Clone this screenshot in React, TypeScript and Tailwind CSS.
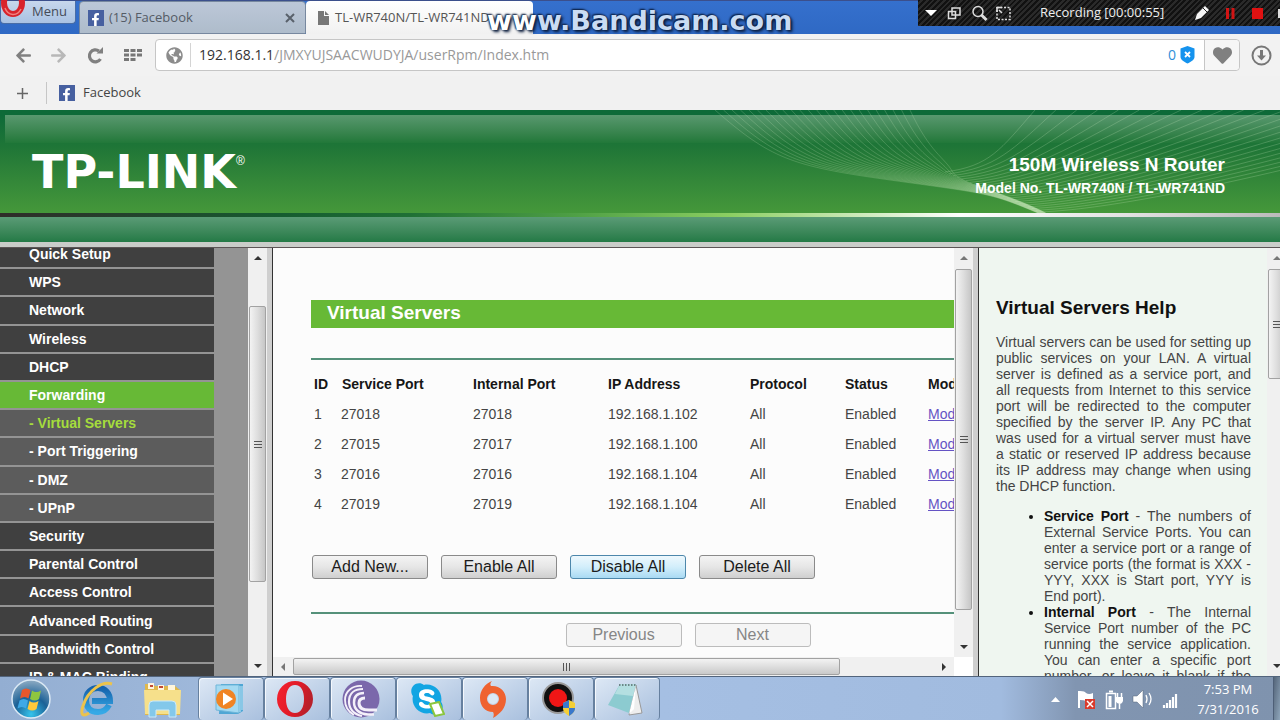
import type { ReactNode } from "react";
import { FaFacebookF, FaSkype, FaHeart, FaArrowLeft, FaArrowRight, FaGlobeAmericas } from "react-icons/fa";

const tone = {
  thumb: "border border-[#a2a2a2] rounded-[2px]",
};

function Arrow({ dir, dark }: { dir: "up" | "down" | "left" | "right"; dark?: boolean }) {
  const d = {
    up: "M0 5 4 1 8 5Z",
    down: "M0 1 4 5 8 1Z",
    left: "M6 -1 2 3 6 7Z",
    right: "M2 -1 6 3 2 7Z",
  }[dir];
  return (
    <svg width="8" height="6" viewBox="0 0 8 6" className="overflow-visible">
      <path d={d} fill={dark ? "#333" : "#777"} />
    </svg>
  );
}

function VScroll({ before, thumb, dark }: { before: string; thumb: string; dark?: boolean }) {
  return (
    <div className="flex w-[19px] shrink-0 flex-col items-center bg-[#f0f0f0]">
      <div className="flex h-5 items-center"><Arrow dir="up" dark={dark} /></div>
      <div className={before} />
      <div className={`flex w-[17px] shrink-0 flex-col items-center justify-center gap-[2px] bg-linear-to-r from-[#f3f3f3] via-[#dedede] to-[#c6c6c6] ${tone.thumb} ${thumb}`}>
        <i className="h-px w-2 bg-[#555]" />
        <i className="h-px w-2 bg-[#555]" />
        <i className="h-px w-2 bg-[#555]" />
      </div>
      <div className="flex-1" />
      <div className="flex h-5 items-center"><Arrow dir="down" dark /></div>
    </div>
  );
}

const menu = [
  ["Quick Setup", "top"], ["WPS", "top"], ["Network", "top"], ["Wireless", "top"], ["DHCP", "top"],
  ["Forwarding", "open"], ["- Virtual Servers", "current"], ["- Port Triggering", "sub"], ["- DMZ", "sub"],
  ["- UPnP", "sub"], ["Security", "top"], ["Parental Control", "top"], ["Access Control", "top"],
  ["Advanced Routing", "top"], ["Bandwidth Control", "top"], ["IP & MAC Binding", "top"],
];

const menuStyle: Record<string, string> = {
  top: "bg-[#404040] text-white",
  open: "bg-[#67b936] text-white",
  current: "bg-[#5c5c5c] text-[#a5dc3c]",
  sub: "bg-[#5c5c5c] text-white",
};

const servers = [
  ["1", "27018", "27018", "192.168.1.102"],
  ["2", "27015", "27017", "192.168.1.100"],
  ["3", "27016", "27016", "192.168.1.104"],
  ["4", "27019", "27019", "192.168.1.104"],
];

function PushButton({ children, kind = "normal" }: { children: ReactNode; kind?: "normal" | "hot" | "off" }) {
  const look = {
    normal: "border-[#8a8a8a] bg-linear-to-b from-[#f4f4f4] via-[#e6e6e6] to-[#cfcfcf] text-[#1c1c1c]",
    hot: "border-[#4d87ab] bg-linear-to-b from-[#eef8fd] via-[#d2eefb] to-[#a9daf3] text-[#1c1c1c]",
    off: "border-[#bcbcbc] bg-[#f5f5f5] text-[#868686]",
  }[kind];
  return (
    <button type="button" disabled={kind === "off"} className={`h-6 w-[116px] rounded-[3px] border text-base leading-5 ${look}`}>
      {children}
    </button>
  );
}

function FacebookMark() {
  return (
    <span className="flex size-4 shrink-0 items-end justify-end bg-[#4760a0] pr-[2px] text-white">
      <FaFacebookF size={13} />
    </span>
  );
}

function Waves() {
  const left = Array.from({ length: 24 }, (_, i) => i / 23);
  const right = Array.from({ length: 24 }, (_, i) => i / 23);
  return (
    <svg aria-hidden="true" viewBox="0 0 580 103" className="absolute top-0 right-0 h-[103px] w-[580px]" fill="none" stroke="#d6f0c8" strokeWidth="1">
      {left.map((t) => (
        <path key={t} opacity=".2" d={`M${15 + 195 * t} 0C${70 + 160 * t} ${48 - 5 * t} ${90 + 155 * t} ${56 - 8 * t} ${190 + 62 * t} ${70 - 9 * t}S${290 + 12 * t} ${83 - 2 * t} ${338 + 8 * t} 103`} />
      ))}
      {right.map((t) => (
        <path key={t} opacity=".22" d={`M${245 + 95 * t} ${62 + 40 * t}C${290 + 125 * t} ${56 + 43 * t} ${300 + 260 * t} ${40 + 30 * t} ${335 + 480 * t} 0`} />
      ))}
    </svg>
  );
}

function TitleBar() {
  return (
    <div className="relative flex h-[34px] shrink-0 items-stretch border-t border-[#3b4f8c] bg-linear-to-b from-[#3570cd] to-[#2f69c4]">
      <button type="button" className="mb-[10px] flex w-[76px] shrink-0 items-center rounded-b border border-t-0 border-[#496da6] bg-linear-to-b from-[#c7d7ec] to-[#a9c2e3] text-[13px] text-[#444b58]">
        <svg width="25" height="18" viewBox="0 0 25 18" className="mb-[6px]">
          <ellipse cx="12" cy="3" rx="9" ry="11" fill="none" stroke="#d8232c" strokeWidth="6" />
          <path d="M4 8C7 16 16 17 20 9" fill="none" stroke="#f0817f" strokeWidth="1.500" />
        </svg>
        <span className="pl-[6px]">Menu</span>
      </button>
      <button type="button" className="ml-[3px] flex w-[227px] shrink-0 items-center rounded-t border border-[#77889f] bg-linear-to-b from-[#bcc7d8] to-[#aebccb] px-2 text-[13px] text-[#555c66]">
        <FacebookMark />
        <span className="flex-1 pl-[5px] text-left">(15) Facebook</span>
        <svg width="10" height="10" viewBox="0 0 10 10" className="mr-[2px]" stroke="#59616b" strokeWidth="2"><path d="m1 1 8 8M9 1 1 9" /></svg>
      </button>
      <button type="button" className="flex w-[227px] shrink-0 items-center overflow-hidden rounded-t bg-linear-to-b from-white to-[#f1f1f1] px-3 text-[13px] whitespace-nowrap text-[#555]">
        <svg width="11" height="14" viewBox="0 0 11 14" className="shrink-0" fill="#777"><path d="M0 0h6v5h5v9H0z" /><path d="M7 0l4 4H7z" /></svg>
        <span className="pl-[6px]">TL-WR740N/TL-WR741ND</span>
      </button>
      <div className="absolute top-[2px] left-[487px] font-['DejaVu_Sans'] text-[27px] leading-9 font-bold text-[#c9dcf3] [text-shadow:0_0_2px_#0a1c3c,2px_2px_3px_#0a1c3c,-1px_-1px_2px_#0a1c3c]">
        <span className="text-white">ww</span>w.Bandicam.com
      </div>
      <div className="absolute -top-px right-0 flex h-[26px] w-[362px] items-center bg-[#1b1b1b] bg-[repeating-linear-gradient(135deg,#111_0_2px,#2a2a2a_2px_4px)] text-[#eee]">
        <svg width="112" height="25" viewBox="0 0 112 25" fill="none" stroke="#ddd" strokeWidth="1.500">
          <path d="M7 9h12l-6 6z" fill="#fff" stroke="none" />
          <path d="M34 7h8v7h-8zM30.500 10.500h7v7h-7z" />
          <circle cx="60" cy="10.500" r="5" /><path d="m63.500 14 5 5" strokeWidth="3" />
          <path d="M79 6.500h13v12H79z" strokeDasharray="2 1.500" /><path d="M79 6v5M79 6.500h5M81 9l3 3" />
        </svg>
        <span className="ml-[10px] w-[140px] text-[13px]">Recording [00:00:55]</span>
        <svg width="100" height="25" viewBox="0 0 100 25" className="shrink-0">
          <path d="m15 19 2-6 8-8 4 4-8 8z" fill="#f5f5f5" /><path d="m23 7 4 4" stroke="#222" />
          <path d="M46 7h3v11h-3zM51.500 7h3v11h-3z" fill="#d21414" />
          <path d="M72 7h11v11H72z" fill="#e01111" />
          <path d="M98 8h2v9h-2z" fill="#ddd" />
        </svg>
      </div>
    </div>
  );
}

function AddressRow() {
  return (
    <div className="flex h-[42px] shrink-0 items-center bg-[#f2f2f2] text-[#808080]">
      <button type="button" aria-label="Back" className="ml-[15px]"><FaArrowLeft size={17} /></button>
      <button type="button" aria-label="Forward" className="ml-[18px] text-[#b8b8b8]"><FaArrowRight size={17} /></button>
      <button type="button" aria-label="Reload" className="ml-5">
        <svg width="17" height="17" viewBox="0 0 17 17" fill="none"><path d="M13.500 12A6 6 0 1 1 12 4" stroke="#808080" strokeWidth="3.200" /><path d="M9.500 6.500H16V0z" fill="#808080" /></svg>
      </button>
      <button type="button" aria-label="Speed dial" className="ml-5">
        <svg width="18" height="14" viewBox="0 0 18 14" fill="#777"><path d="M0 1h5v3H0zM6.500 1h5v3h-5zM13 1h5v3h-5zM0 5.500h5v3H0zM6.500 5.500h5v3h-5zM13 5.500h5v3h-5zM0 10h5v3H0zM6.500 10h5v3h-5z" /></svg>
      </button>
      <div className="ml-[13px] flex h-8 flex-1 items-center rounded border border-[#c6c6c6] bg-white text-sm">
        <FaGlobeAmericas size={17} className="ml-[10px] text-[#8c8c8c]" />
        <span className="ml-[7px] h-6 w-px bg-[#d4d4d4]" />
        <label htmlFor="url" className="pl-2 text-[#333]">192.168.1.1</label>
        <input id="url" defaultValue="/JMXYUJSAACWUDYJA/userRpm/Index.htm" className="min-w-0 flex-1 bg-transparent text-[#999] outline-none" />
        <span className="text-[#2f8fd8]">0</span>
        <svg width="15" height="18" viewBox="0 0 15 18" className="mr-[9px] ml-1"><path d="M7.500 0 14.500 2.500V11c0 3-4 5-7 6.500C4.500 16 .5 14 .5 11V2.500z" fill="#1593ee" /><path d="m5 6 5 5M10 6l-5 5" stroke="#fff" strokeWidth="1.800" /></svg>
        <button type="button" aria-label="Bookmark page" className="flex h-[30px] w-[35px] items-center justify-center rounded-r border-l border-[#c6c6c6] bg-[#f6f6f6]"><FaHeart size={19} /></button>
      </div>
      <button type="button" aria-label="Downloads" className="mr-[8px] ml-[11px]">
        <svg width="21" height="21" viewBox="0 0 21 21" fill="none" stroke="#777"><circle cx="10.500" cy="10.500" r="9" strokeWidth="2" /><path d="M10.500 5v7" strokeWidth="3" /><path d="M6 10.500h9l-4.500 5z" fill="#777" stroke="none" /></svg>
      </button>
    </div>
  );
}

function RouterHeader() {
  return (
    <header className="shrink-0">
      <div className="relative flex h-[103px] items-center justify-between overflow-hidden bg-linear-to-b from-[#0d6a38] from-5% via-[#1f7637] via-36% to-[#45983a] pr-[55px] pl-8 text-white">
        <div className="absolute top-[5px] right-0 left-[5px] h-[28px] bg-linear-to-b from-[#58986f] to-[#217839]" />
        <Waves />
        <div className="relative mt-5 flex items-start">
          <span className="font-['DejaVu_Sans'] text-[46px] leading-[46px] font-bold">TP-LINK</span>
          <span className="mt-1 text-xs leading-4">®</span>
        </div>
        <div className="relative mt-[28px] text-right font-bold">
          <div className="text-[19px] leading-6">150M Wireless N Router</div>
          <div className="text-sm leading-[22px]">Model No. TL-WR740N / TL-WR741ND</div>
        </div>
      </div>
      <div className="h-1 bg-[linear-gradient(90deg,#2f2c29_0%,#155c30_22%,#1f7035_32%,#4fa045_45%,#8ccf62_57%,#ffffff_75%,#e2e2e2_88%,#bababa_100%)]" />
      <div className="h-[25px] bg-linear-to-b from-[#5a9b76] to-[#237a46]" />
      <div className="h-[5px] bg-[#c9cdc9]" />
      <div className="h-px bg-[#5b5555]" />
    </header>
  );
}

function MainFrame() {
  return (
    <main className="flex min-w-0 flex-1 flex-col bg-[#fcfcfc]">
      <div className="flex min-h-0 flex-1">
        <div className="min-w-0 flex-1 overflow-hidden">
          <div className="w-[792px] pt-[52px] pl-[38px]">
            <h1 className="h-7 bg-[#67b936] pl-4 text-[19px] leading-[26px] font-bold text-white">Virtual Servers</h1>
            <hr className="mt-[30px] h-[2px] border-0 bg-[#55917a]" />
            <table className="mt-[9px] ml-[3px] w-[714px] table-fixed text-left text-sm text-[#444]">
              <thead className="text-[#161616]">
                <tr className="h-[30px]">
                  <th className="w-[27px]">ID</th>
                  <th className="w-[132px] pl-px">Service Port</th>
                  <th className="w-[135px]">Internal Port</th>
                  <th className="w-[142px]">IP Address</th>
                  <th className="w-[95px]">Protocol</th>
                  <th className="w-[83px]">Status</th>
                  <th className="w-[100px]">Modify</th>
                </tr>
              </thead>
              <tbody>
                {servers.map(([id, port, inner, ip]) => (
                  <tr key={id} className="h-[30px]">
                    <td>{id}</td>
                    <td>{port}</td>
                    <td>{inner}</td>
                    <td>{ip}</td>
                    <td>All</td>
                    <td>Enabled</td>
                    <td className="whitespace-nowrap"><a href="#modify" className="text-[#6553c4] underline">Modify</a></td>
                  </tr>
                ))}
              </tbody>
            </table>
            <div className="mt-9 ml-px flex gap-[13px]">
              <PushButton>Add New...</PushButton>
              <PushButton>Enable All</PushButton>
              <PushButton kind="hot">Disable All</PushButton>
              <PushButton>Delete All</PushButton>
            </div>
            <hr className="mt-[33px] h-[2px] border-0 bg-[#55917a]" />
            <div className="mt-[9px] flex justify-center gap-[13px]">
              <PushButton kind="off">Previous</PushButton>
              <PushButton kind="off">Next</PushButton>
            </div>
          </div>
        </div>
        <VScroll before="h-px" thumb="h-[341px]" />
      </div>
      <div className="flex h-[19px] shrink-0 items-center bg-[#f0f0f0]">
        <span className="flex w-[20px] justify-center"><Arrow dir="left" /></span>
        <span className="flex h-[17px] w-[547px] items-center justify-center gap-[2px] rounded-[2px] border border-[#a2a2a2] bg-linear-to-b from-[#f3f3f3] via-[#dedede] to-[#c9c9c9]">
          <i className="h-2 w-px bg-[#555]" />
          <i className="h-2 w-px bg-[#555]" />
          <i className="h-2 w-px bg-[#555]" />
        </span>
        <span className="flex-1" />
        <span className="flex w-[20px] justify-center"><Arrow dir="right" dark /></span>
        <span className="h-full w-[19px] bg-white" />
      </div>
    </main>
  );
}

function HelpFrame() {
  return (
    <aside className="flex w-[301px] shrink-0 bg-[#eff6f0]">
      <div className="flex-1 overflow-hidden pt-[49px] pr-4 pl-[17px] text-justify text-sm leading-4 text-[#444]">
        <h2 className="text-left text-[19px] leading-[22px] font-bold text-[#111]">Virtual Servers Help</h2>
        <p className="mt-[15px]">
          Virtual servers can be used for setting up public services on your LAN. A virtual server is defined as a
          service port, and all requests from Internet to this service port will be redirected to the computer specified
          by the server IP. Any PC that was used for a virtual server must have a static or reserved IP address because
          its IP address may change when using the DHCP function.
        </p>
        <ul className="mt-[14px] list-disc pl-12 marker:text-[#111]">
          <li>
            <b className="text-[#111]">Service Port</b> - The numbers of External Service Ports. You can enter a service
            port or a range of service ports (the format is XXX - YYY, XXX is Start port, YYY is End port).
          </li>
          <li>
            <b className="text-[#111]">Internal Port</b> - The Internal Service Port number of the PC running the
            service application. You can enter a specific port number, or leave it blank if the Internal Port is the
            same as the Service Port.
          </li>
        </ul>
      </div>
      <div className="flex w-[13px] shrink-0 overflow-hidden">
        <VScroll before="h-px" thumb="h-[110px]" />
      </div>
    </aside>
  );
}

const apps: { name: string; running: boolean; icon: ReactNode }[] = [
  {
    name: "Start", running: false, icon: (
      <svg width="40" height="40" viewBox="0 0 40 40">
        <defs><radialGradient id="orb" cx=".5" cy=".9" r=".9"><stop offset="0" stopColor="#35c4ec" /><stop offset=".5" stopColor="#1b6196" /><stop offset="1" stopColor="#8facc4" /></radialGradient></defs>
        <circle cx="20" cy="20" r="19" fill="url(#orb)" stroke="#dbe9f5" strokeWidth="1.500" />
        <path d="M11 11q4-3 8.500 0l-2 8.500q-4-3-8.500 0z" fill="#e8572c" /><path d="M21 11.500q4 3 9 0l-2 8.500q-4 3-9 0z" fill="#8fc63f" />
        <path d="M8.500 21.500q4-3 8.500 0l-2 8q-4-3-8.500 0z" fill="#3fa9e6" /><path d="M18.500 22q4 3 9 0l-2 8q-4 3-9 0z" fill="#ffc93a" />
      </svg>
    ),
  },
  {
    name: "Internet Explorer", running: false, icon: (
      <svg width="38" height="38" viewBox="0 0 38 38" fill="none">
        <defs><linearGradient id="ie" x2="0" y2="1"><stop stopColor="#1562ac" /><stop offset="1" stopColor="#35a9e6" /></linearGradient></defs>
        <path d="M31 25C28 31 24 32 20 32 12 32 8 27 8 20S13 8 20 8s12 5 12 13H14" stroke="url(#ie)" strokeWidth="6" />
        <path d="M34 4C24 1 10 10 5 26c-3 9 0 11 6 7" stroke="#ecc34c" strokeWidth="3" />
      </svg>
    ),
  },
  {
    name: "Explorer", running: false, icon: (
      <svg width="40" height="38" viewBox="0 0 40 38">
        <path d="M2 4h8l2 2h20l5 4v25H2z" fill="#dfb84d" /><path d="M5 3h6v6H5zM15 5h6v5h-6zM25 5h7v5h-7z" fill="#fff5dc" /><path d="M7 5h3v2H7zM16 6h4v2h-4z" fill="#c24a35" />
        <path d="M1 10h37l-1 24H2z" fill="#f6e08b" /><path d="M6 37V25q0-4 4-4h19q4 0 4 4v12h-7v-7H13v7z" fill="#83c8ea" stroke="#cbeafa" />
      </svg>
    ),
  },
  {
    name: "Media Player", running: true, icon: (
      <svg width="32" height="32" viewBox="0 0 32 32">
        <path d="M8 1h22v27l-5 3H6z" fill="#4fa6d4" /><path d="M3 2h23v28L3 27z" fill="#a4daf2" stroke="#6fb6d9" /><path d="M27 3v26M29 3v24" stroke="#c4e8f8" />
        <circle cx="13" cy="16" r="10" fill="#f08424" /><path d="M10 9.500v13l10-6.500z" fill="#fff" />
      </svg>
    ),
  },
  {
    name: "Opera", running: true, icon: (
      <svg width="36" height="36" viewBox="0 0 36 36">
        <defs><linearGradient id="op" x2="1" y2=".3"><stop stopColor="#f5222f" /><stop offset=".6" stopColor="#e01b28" /><stop offset="1" stopColor="#b8202a" /></linearGradient></defs>
        <path fillRule="evenodd" fill="url(#op)" d="M18 0a18 18 0 1 0 0 36 18 18 0 1 0 0-36zM18 4c6 0 9 6 9 14s-3 14-9 14-9-6-9-14 3-14 9-14z" />
      </svg>
    ),
  },
  {
    name: "BitTorrent", running: true, icon: (
      <svg width="38" height="38" viewBox="0 0 38 38" fill="none">
        <circle cx="19" cy="19" r="18.500" fill="#7b68ab" />
        <path d="M35 30H27C20 30 17 27 17 23c0-3 2-5 6-5" stroke="#f4f0fa" strokeWidth="3" />
        <path d="M32 34.500H26C17 34 12 29 12 22.500 12 16 16 13 22 13" stroke="#f4f0fa" strokeWidth="2.500" />
        <path d="M20 36C11 34 7 28 7 21.500 7 13 13 9 21 9" stroke="#f4f0fa" strokeWidth="2.200" />
        <path d="M12 35C5 31 3 26 3 20 3 11 11 5 20 6" stroke="#f4f0fa" strokeWidth="1.800" />
      </svg>
    ),
  },
  {
    name: "Skype", running: true, icon: (
      <span className="relative text-[#12a5e3]">
        <span className="absolute inset-2 bg-white" />
        <FaSkype size={36} className="relative" />
        <svg width="16" height="16" viewBox="0 0 16 16" className="absolute right-0 bottom-0"><path d="m1 3 9-2 5 12-9 2z" fill="#fff" stroke="#8bc63e" strokeWidth="2" /></svg>
      </span>
    ),
  },
  {
    name: "Origin", running: true, icon: (
      <svg width="30" height="38" viewBox="0 0 30 38">
        <path fillRule="evenodd" fill="#ef6230" d="M14 1c-2 2-2 4-1 5 8-1 15 5 15 13 0 9-6 15-13 19 1-3 1-4 0-6C7 32 2 26 2 18 2 10 7 4 14 1zM15 13a6 6 0 1 0 0 12 6 6 0 1 0 0-12z" /><circle cx="15" cy="19" r="5" fill="#dbe8f5" />
      </svg>
    ),
  },
  {
    name: "Bandicam", running: true, icon: (
      <svg width="34" height="36" viewBox="0 0 34 36">
        <circle cx="16" cy="17" r="15" fill="#111" stroke="#999" strokeWidth="2" /><circle cx="16" cy="17" r="9" fill="#f01616" />
        <path d="m27 19 6 3v5c0 4-3 6-6 8-3-2-6-4-6-8v-5z" fill="#f4cf36" /><path d="m27 19-6 3v5h6zM27 27h6c0 4-3 6-6 8z" fill="#3978cc" />
      </svg>
    ),
  },
  {
    name: "Notepad", running: true, icon: (
      <svg width="36" height="34" viewBox="0 0 36 34">
        <path d="m29 3 6 28-13 2z" fill="#eee" stroke="#999" /><path d="M13 2h16l-7 29-21-8z" fill="#8ccbd0" /><path d="M13 2h16l-3 12-18-2z" fill="#b4dfe1" /><path d="M12 3h17" stroke="#6d8588" strokeWidth="2" strokeDasharray="1.500 1.500" /><path d="m29 3-7 29 5-5z" fill="#fff" />
      </svg>
    ),
  },
];

function Taskbar() {
  return (
    <footer className="flex h-11 shrink-0 items-stretch border-t border-[#52647c] bg-linear-to-r from-[#93aed2] via-[#a9c1e2] via-30% to-[#9fb9dc]">
      {apps.map((app) => (
        <button
          type="button"
          key={app.name}
          aria-label={app.name}
          className={`flex w-[66px] shrink-0 items-center justify-center pr-1 ${app.running ? "rounded border border-b-0 border-[#66809f] bg-linear-to-br from-[#dde8f5] to-[#a9c0de] shadow-[inset_1px_1px_0_#f4f8fd]" : ""}`}
        >
          {app.icon}
        </button>
      ))}
      <div className="flex flex-1 items-center justify-end bg-[linear-gradient(90deg,#a5bfe3_0%,#a1bbdf_55%,#8195b1_67%,#7f93ae_100%)] text-white">
        <svg width="150" height="42" viewBox="0 0 150 42" fill="none">
          <path d="m22 24 4.500-5 4.500 5z" fill="#fff" />
          <path d="M50 13v17" stroke="#fff" strokeWidth="2" /><path d="M51 13q5 0 6 2 3 2 7 0v9q-4 1-7-1-2-1-6-1z" fill="#fff" /><path d="M56 21h10v10H56z" fill="#d93a2c" /><path d="m58 23 6 6M64 23l-6 6" stroke="#fff" strokeWidth="1.500" />
          <path d="M77.500 15.500h9v15h-9z" stroke="#fff" strokeWidth="1.500" /><path d="M80 13.500h4" stroke="#fff" strokeWidth="2" /><path d="M79.500 18h3v11h-3z" fill="#fff" /><path d="M86.500 19h7.500v4q-1 3-3.500 3t-4-3z" fill="#fff" /><path d="M88.500 15v4M92.500 15v4M90.500 26v5" stroke="#fff" strokeWidth="1.500" />
          <path d="M104 18h4l6-6v18l-6-6h-4z" fill="#fff" stroke="#55657a" strokeWidth=".5" /><path d="M117 17q2 4 0 8M120 15q4 6 0 12" stroke="#fff" strokeWidth="1.300" />
          <path d="M135 27v3M138 25v5M141 22v8M144 19v11M147 16v14" stroke="#fff" strokeWidth="2.200" />
        </svg>
        <div className="w-[94px] pl-1 text-center text-[13px] leading-5">
          <div>7:53 PM</div>
          <div>7/31/2016</div>
        </div>
        <div className="h-full w-[7px] border-l border-[#4e5f77] bg-linear-to-br from-[#55667b] to-[#8fa6bb]" />
      </div>
    </footer>
  );
}

export default function App() {
  return (
    <div className="flex h-screen flex-col overflow-hidden bg-[#f2f2f2] font-['Open_Sans',sans-serif]">
      <TitleBar />
      <AddressRow />
      <nav aria-label="Bookmarks" className="flex h-[34px] shrink-0 items-center bg-[#f1f1f1] text-[13px] text-[#444]">
        <button type="button" aria-label="Add bookmark" className="ml-[17px]">
          <svg width="11" height="11" viewBox="0 0 11 11" stroke="#666" strokeWidth="1.500"><path d="M5.500 0v11M0 5.500h11" /></svg>
        </button>
        <span className="ml-[18px] h-[22px] w-px bg-[#c6c6c6]" />
        <a href="#facebook" className="ml-3 flex items-center gap-2"><FacebookMark />Facebook</a>
      </nav>
      <div className="flex min-h-0 flex-1 flex-col font-['Liberation_Sans',sans-serif]">
        <RouterHeader />
        <div className="flex min-h-0 flex-1">
          <nav aria-label="Router menu" className="flex w-[267px] shrink-0 bg-[#949494]">
            <div className="min-w-0 flex-1 overflow-hidden">
              <ul className="-mt-[7px] flex h-[451px] w-[214px] flex-col text-sm font-bold">
                {menu.map(([label, kind]) => (
                  <li key={label} className={`flex-1 border-b-2 border-[#949494] ${menuStyle[kind]}`}>
                    <a href="#menu" className="flex h-full items-center pl-[29px]">{label}</a>
                  </li>
                ))}
              </ul>
            </div>
            <VScroll before="h-[38px] shrink-0" thumb="h-[276px]" dark />
          </nav>
          <div className="w-[6px] shrink-0 border-r border-[#333] bg-[#cfcfcf]" />
          <MainFrame />
          <div className="w-[6px] shrink-0 border-r border-[#333] bg-[#cfcfcf]" />
          <HelpFrame />
        </div>
      </div>
      <Taskbar />
    </div>
  );
}
